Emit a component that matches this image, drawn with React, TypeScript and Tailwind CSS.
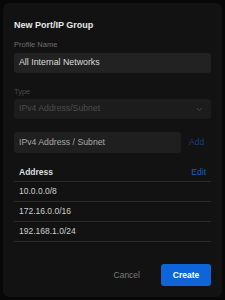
export default function App() {
  return (
    <div
      className="w-[225px] h-[300px] bg-[#070707] p-[3px] text-[#e5e5e5]"
      style={{ fontFamily: '"Liberation Sans", Arial, sans-serif' }}
    >
      <div className="h-full rounded-md bg-[#121212] px-[11px] pt-[16px] flex flex-col">
        <h2 className="text-[9px] font-bold leading-[12px] text-[#e8e8e8]">New Port/IP Group</h2>

        <label className="mt-[9px] text-[7.5px] leading-[10px] text-[#6f6f6f]">Profile Name</label>
        <div className="mt-[3px] h-[20px] rounded-[3px] bg-[#222222] px-[5px] flex items-center text-[8.8px] text-[#dcdcdc]">
          All Internal Networks
        </div>

        <label className="mt-[14px] text-[7.5px] leading-[10px] text-[#4a4a4a]">Type</label>
        <div className="mt-[2px] h-[20px] rounded-[3px] bg-[#1c1c1c] pl-[5px] pr-[8px] flex items-center justify-between text-[8.7px] text-[#4c4c4c]">
          <span>IPv4 Address/Subnet</span>
          <svg width="7" height="5" viewBox="0 0 7 5" fill="none" stroke="#4a4a4a" strokeWidth="1">
            <path d="M1 1.2l2.5 2.5L6 1.2" />
          </svg>
        </div>

        <div className="mt-[13px] flex items-center gap-[8px]">
          <div className="h-[21px] flex-1 rounded-[3px] bg-[#1f1f1f] px-[5px] flex items-center text-[8.7px] text-[#a8a8a8]">
            IPv4 Address / Subnet
          </div>
          <span className="w-[22px] text-[8.5px] text-[#193f80]">Add</span>
        </div>

        <div className="mt-[10px] flex items-center justify-between pl-[5px] pr-[5px] h-[19px] border-b border-[#2a2a2a]">
          <span className="text-[8.5px] font-bold text-[#dedede]">Address</span>
          <span className="text-[8.5px] text-[#1f5cc0]">Edit</span>
        </div>
        {['10.0.0.0/8', '172.16.0.0/16', '192.168.1.0/24'].map((a) => (
          <div key={a} className="h-[20px] flex items-center pl-[5px] border-b border-[#2a2a2a] text-[8.5px] text-[#cfcfcf]">
            {a}
          </div>
        ))}

        <div className="mt-[22px] flex items-center justify-end gap-[21px]">
          <span className="text-[8.5px] text-[#7a7a7a]">Cancel</span>
          <button className="h-[22px] w-[50px] rounded-[3px] bg-[#0d65d9] text-[8.5px] font-bold text-white">Create</button>
        </div>
      </div>
    </div>
  );
}
